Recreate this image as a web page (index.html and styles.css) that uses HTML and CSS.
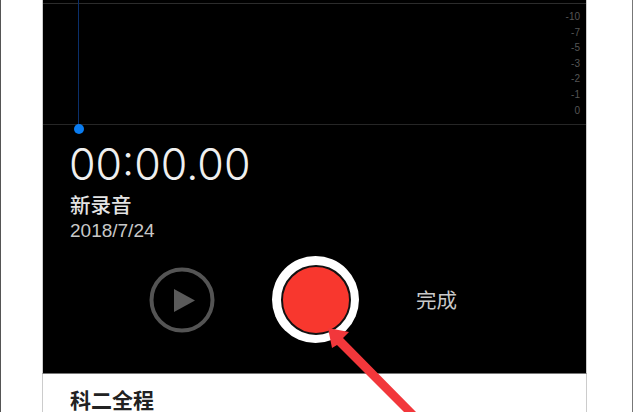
FILE: index.html
```html
<!DOCTYPE html>
<html lang="zh">
<head>
<meta charset="utf-8">
<title>语音备忘录</title>
<link rel="stylesheet" href="styles.css">
</head>
<body>
<div class="screen">
  <section class="recorder">
    <div class="wave">
      <div class="scale">
        <span>-10</span><span>-7</span><span>-5</span><span>-3</span><span>-2</span><span>-1</span><span>0</span>
      </div>
      <div class="playhead"></div>
      <div class="dot"></div>
    </div>
    <div class="info">
      <div class="time">00:00.00</div>
      <div class="name">新录音</div>
      <div class="date">2018/7/24</div>
    </div>
    <div class="controls">
      <svg class="play" width="66" height="66" viewBox="0 0 66 66">
        <circle cx="33" cy="33" r="30.5" fill="none" stroke="#545454" stroke-width="4"/>
        <path d="M25 22L46 33.5L25 45Z" fill="#5a5a5a"/>
      </svg>
      <div class="record"><div class="record-core"></div></div>
      <div class="done">完成</div>
    </div>
  </section>
  <section class="list">
    <div class="item">科二全程</div>
  </section>
  <svg class="arrow" width="633" height="412" viewBox="0 0 633 412">
    <path d="M328 328L349 332L343 338L416 412L404 412L337 345L332 348Z" fill="#f2373b"/>
  </svg>
</div>
</body>
</html>
```
FILE: styles.css
```css
* { box-sizing: border-box; }
html, body { margin: 0; padding: 0; }
body {
  width: 633px;
  height: 412px;
  overflow: hidden;
  background: #fff;
  font-family: "Liberation Sans", "Noto Sans CJK SC", sans-serif;
}
.screen {
  position: relative;
  width: 633px;
  height: 412px;
  padding: 0 45px 0 41px;
  overflow: hidden;
  background: #fff;
  border-left: 1px solid #555;
  border-right: 1px solid #777;
}
.recorder {
  background: #000;
  height: 374px;
  border-left: 1px solid #ccc;
  border-right: 1px solid #ccc;
  border-bottom: 1px solid #777;
}
.wave {
  position: relative;
  height: 125px;
  padding-top: 3px;
  border-bottom: 1px solid #262626;
  background: linear-gradient(#2c2c2c, #2c2c2c) 0 3px / 100% 1px no-repeat;
}
.scale {
  display: flex;
  flex-direction: column;
  align-items: flex-end;
  padding: 6px 6px 0 0;
  color: #555;
  font-size: 10px;
  line-height: 15.6px;
}
.playhead {
  position: absolute;
  left: 35px;
  top: 0;
  width: 1px;
  height: 125px;
  background: #0a2f6a;
}
.dot {
  position: absolute;
  left: 31px;
  top: 124px;
  width: 10px;
  height: 10px;
  border-radius: 50%;
  background: #0a7cf0;
}
.info {
  padding: 19px 0 0 27px;
}
.time {
  margin-left: -1px;
  color: #efefef;
  font-family: "Inter", "Liberation Sans", sans-serif;
  font-size: 43px;
  font-weight: 300;
  line-height: 40px;
}
.name {
  margin-top: 11px;
  color: #e4e4e4;
  font-size: 20.5px;
  font-weight: 500;
  line-height: 22px;
}
.date {
  margin-top: 4px;
  color: #c8c8c8;
  font-size: 19px;
  line-height: 20px;
}
.controls {
  display: flex;
  align-items: center;
  padding: 15px 0 0 106px;
}
.play { display: block; }
.record {
  margin-left: 57px;
  width: 87px;
  height: 87px;
  border-radius: 50%;
  background: #fff;
  padding: 8.5px;
}
.record-core {
  width: 70px;
  height: 70px;
  border-radius: 50%;
  background: #f8372e;
  border: 2px solid #111;
}
.done {
  margin: 0 0 2px 57px;
  color: #c9c9c9;
  font-size: 20.5px;
}
.list {
  height: 38px;
  padding: 14px 0 0 27px;
  border-left: 1px solid #ccc;
  border-right: 1px solid #ccc;
}
.item {
  color: #222;
  font-size: 21px;
  font-weight: 700;
  line-height: 26px;
}
.arrow {
  position: absolute;
  left: -1px;
  top: 0;
}
```
